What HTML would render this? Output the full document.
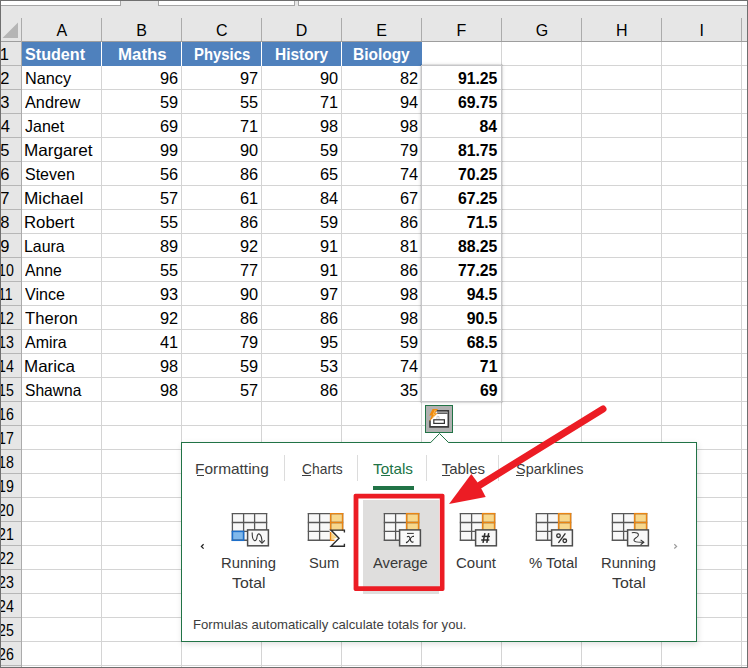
<!DOCTYPE html><html><head><meta charset="utf-8"><style>html,body{margin:0;padding:0;}body{width:748px;height:668px;overflow:hidden;position:relative;background:#fff;}</style></head><body>
<div style="position:absolute;left:0px;top:0px;width:748px;height:42px;background:#e6e6e6;"></div>
<div style="position:absolute;left:0px;top:1px;width:120px;height:4px;background:#fff;"></div>
<div style="position:absolute;left:120px;top:1px;width:1px;height:5px;background:#a6a6a6;"></div>
<div style="position:absolute;left:0px;top:5px;width:121px;height:1px;background:#a6a6a6;"></div>
<div style="position:absolute;left:159px;top:1px;width:135px;height:4px;background:#fff;"></div>
<div style="position:absolute;left:158px;top:1px;width:1px;height:5px;background:#a6a6a6;"></div>
<div style="position:absolute;left:294px;top:1px;width:1px;height:5px;background:#a6a6a6;"></div>
<div style="position:absolute;left:158px;top:5px;width:137px;height:1px;background:#a6a6a6;"></div>
<div style="position:absolute;left:299px;top:1px;width:448px;height:4px;background:#fff;"></div>
<div style="position:absolute;left:298px;top:1px;width:1px;height:5px;background:#a6a6a6;"></div>
<div style="position:absolute;left:298px;top:5px;width:449px;height:1px;background:#a6a6a6;"></div>
<div style="position:absolute;left:0px;top:41px;width:748px;height:1px;background:#9e9e9e;"></div>
<div style="position:absolute;left:0px;top:42px;width:21px;height:626px;background:#e6e6e6;"></div>
<div style="position:absolute;left:21px;top:18px;width:1px;height:650px;background:#ababab;"></div>
<svg style="position:absolute;left:0;top:0" width="30" height="42"><polygon points="2.5,38 18,22.5 18,38" fill="#b5b5b5"/></svg>
<div style="position:absolute;left:101px;top:18px;width:1px;height:23px;background:#ababab;"></div>
<div style="position:absolute;left:56.48px;top:23.06px;font:400 16px/16px 'Liberation Sans', sans-serif;color:#000;white-space:nowrap;">A</div>
<div style="position:absolute;left:181px;top:18px;width:1px;height:23px;background:#ababab;"></div>
<div style="position:absolute;left:136.24px;top:23.06px;font:400 16px/16px 'Liberation Sans', sans-serif;color:#000;white-space:nowrap;">B</div>
<div style="position:absolute;left:261px;top:18px;width:1px;height:23px;background:#ababab;"></div>
<div style="position:absolute;left:215.92px;top:23.06px;font:400 16px/16px 'Liberation Sans', sans-serif;color:#000;white-space:nowrap;">C</div>
<div style="position:absolute;left:341px;top:18px;width:1px;height:23px;background:#ababab;"></div>
<div style="position:absolute;left:295.76px;top:23.06px;font:400 16px/16px 'Liberation Sans', sans-serif;color:#000;white-space:nowrap;">D</div>
<div style="position:absolute;left:421px;top:18px;width:1px;height:23px;background:#ababab;"></div>
<div style="position:absolute;left:376.16px;top:23.06px;font:400 16px/16px 'Liberation Sans', sans-serif;color:#000;white-space:nowrap;">E</div>
<div style="position:absolute;left:501px;top:18px;width:1px;height:23px;background:#ababab;"></div>
<div style="position:absolute;left:456.60px;top:23.06px;font:400 16px/16px 'Liberation Sans', sans-serif;color:#000;white-space:nowrap;">F</div>
<div style="position:absolute;left:581px;top:18px;width:1px;height:23px;background:#ababab;"></div>
<div style="position:absolute;left:535.76px;top:23.06px;font:400 16px/16px 'Liberation Sans', sans-serif;color:#000;white-space:nowrap;">G</div>
<div style="position:absolute;left:661px;top:18px;width:1px;height:23px;background:#ababab;"></div>
<div style="position:absolute;left:616.04px;top:23.06px;font:400 16px/16px 'Liberation Sans', sans-serif;color:#000;white-space:nowrap;">H</div>
<div style="position:absolute;left:741px;top:18px;width:1px;height:23px;background:#ababab;"></div>
<div style="position:absolute;left:699.60px;top:23.06px;font:400 16px/16px 'Liberation Sans', sans-serif;color:#000;white-space:nowrap;">I</div>
<div style="position:absolute;left:22px;top:65px;width:726px;height:1px;background:#d4d4d4;"></div>
<div style="position:absolute;left:0px;top:65px;width:21px;height:1px;background:#b6b6b6;"></div>
<div style="position:absolute;left:22px;top:89px;width:726px;height:1px;background:#d4d4d4;"></div>
<div style="position:absolute;left:0px;top:89px;width:21px;height:1px;background:#b6b6b6;"></div>
<div style="position:absolute;left:22px;top:113px;width:726px;height:1px;background:#d4d4d4;"></div>
<div style="position:absolute;left:0px;top:113px;width:21px;height:1px;background:#b6b6b6;"></div>
<div style="position:absolute;left:22px;top:137px;width:726px;height:1px;background:#d4d4d4;"></div>
<div style="position:absolute;left:0px;top:137px;width:21px;height:1px;background:#b6b6b6;"></div>
<div style="position:absolute;left:22px;top:161px;width:726px;height:1px;background:#d4d4d4;"></div>
<div style="position:absolute;left:0px;top:161px;width:21px;height:1px;background:#b6b6b6;"></div>
<div style="position:absolute;left:22px;top:185px;width:726px;height:1px;background:#d4d4d4;"></div>
<div style="position:absolute;left:0px;top:185px;width:21px;height:1px;background:#b6b6b6;"></div>
<div style="position:absolute;left:22px;top:209px;width:726px;height:1px;background:#d4d4d4;"></div>
<div style="position:absolute;left:0px;top:209px;width:21px;height:1px;background:#b6b6b6;"></div>
<div style="position:absolute;left:22px;top:233px;width:726px;height:1px;background:#d4d4d4;"></div>
<div style="position:absolute;left:0px;top:233px;width:21px;height:1px;background:#b6b6b6;"></div>
<div style="position:absolute;left:22px;top:257px;width:726px;height:1px;background:#d4d4d4;"></div>
<div style="position:absolute;left:0px;top:257px;width:21px;height:1px;background:#b6b6b6;"></div>
<div style="position:absolute;left:22px;top:281px;width:726px;height:1px;background:#d4d4d4;"></div>
<div style="position:absolute;left:0px;top:281px;width:21px;height:1px;background:#b6b6b6;"></div>
<div style="position:absolute;left:22px;top:305px;width:726px;height:1px;background:#d4d4d4;"></div>
<div style="position:absolute;left:0px;top:305px;width:21px;height:1px;background:#b6b6b6;"></div>
<div style="position:absolute;left:22px;top:329px;width:726px;height:1px;background:#d4d4d4;"></div>
<div style="position:absolute;left:0px;top:329px;width:21px;height:1px;background:#b6b6b6;"></div>
<div style="position:absolute;left:22px;top:353px;width:726px;height:1px;background:#d4d4d4;"></div>
<div style="position:absolute;left:0px;top:353px;width:21px;height:1px;background:#b6b6b6;"></div>
<div style="position:absolute;left:22px;top:377px;width:726px;height:1px;background:#d4d4d4;"></div>
<div style="position:absolute;left:0px;top:377px;width:21px;height:1px;background:#b6b6b6;"></div>
<div style="position:absolute;left:22px;top:401px;width:726px;height:1px;background:#d4d4d4;"></div>
<div style="position:absolute;left:0px;top:401px;width:21px;height:1px;background:#b6b6b6;"></div>
<div style="position:absolute;left:22px;top:425px;width:726px;height:1px;background:#d4d4d4;"></div>
<div style="position:absolute;left:0px;top:425px;width:21px;height:1px;background:#b6b6b6;"></div>
<div style="position:absolute;left:22px;top:449px;width:726px;height:1px;background:#d4d4d4;"></div>
<div style="position:absolute;left:0px;top:449px;width:21px;height:1px;background:#b6b6b6;"></div>
<div style="position:absolute;left:22px;top:473px;width:726px;height:1px;background:#d4d4d4;"></div>
<div style="position:absolute;left:0px;top:473px;width:21px;height:1px;background:#b6b6b6;"></div>
<div style="position:absolute;left:22px;top:497px;width:726px;height:1px;background:#d4d4d4;"></div>
<div style="position:absolute;left:0px;top:497px;width:21px;height:1px;background:#b6b6b6;"></div>
<div style="position:absolute;left:22px;top:521px;width:726px;height:1px;background:#d4d4d4;"></div>
<div style="position:absolute;left:0px;top:521px;width:21px;height:1px;background:#b6b6b6;"></div>
<div style="position:absolute;left:22px;top:545px;width:726px;height:1px;background:#d4d4d4;"></div>
<div style="position:absolute;left:0px;top:545px;width:21px;height:1px;background:#b6b6b6;"></div>
<div style="position:absolute;left:22px;top:569px;width:726px;height:1px;background:#d4d4d4;"></div>
<div style="position:absolute;left:0px;top:569px;width:21px;height:1px;background:#b6b6b6;"></div>
<div style="position:absolute;left:22px;top:593px;width:726px;height:1px;background:#d4d4d4;"></div>
<div style="position:absolute;left:0px;top:593px;width:21px;height:1px;background:#b6b6b6;"></div>
<div style="position:absolute;left:22px;top:617px;width:726px;height:1px;background:#d4d4d4;"></div>
<div style="position:absolute;left:0px;top:617px;width:21px;height:1px;background:#b6b6b6;"></div>
<div style="position:absolute;left:22px;top:641px;width:726px;height:1px;background:#d4d4d4;"></div>
<div style="position:absolute;left:0px;top:641px;width:21px;height:1px;background:#b6b6b6;"></div>
<div style="position:absolute;left:22px;top:665px;width:726px;height:1px;background:#d4d4d4;"></div>
<div style="position:absolute;left:0px;top:665px;width:21px;height:1px;background:#b6b6b6;"></div>
<div style="position:absolute;left:101px;top:42px;width:1px;height:626px;background:#d4d4d4;"></div>
<div style="position:absolute;left:181px;top:42px;width:1px;height:626px;background:#d4d4d4;"></div>
<div style="position:absolute;left:261px;top:42px;width:1px;height:626px;background:#d4d4d4;"></div>
<div style="position:absolute;left:341px;top:42px;width:1px;height:626px;background:#d4d4d4;"></div>
<div style="position:absolute;left:421px;top:42px;width:1px;height:626px;background:#d4d4d4;"></div>
<div style="position:absolute;left:501px;top:42px;width:1px;height:626px;background:#d4d4d4;"></div>
<div style="position:absolute;left:581px;top:42px;width:1px;height:626px;background:#d4d4d4;"></div>
<div style="position:absolute;left:661px;top:42px;width:1px;height:626px;background:#d4d4d4;"></div>
<div style="position:absolute;left:741px;top:42px;width:1px;height:626px;background:#d4d4d4;"></div>
<div style="position:absolute;left:-0.24px;top:45.53px;font:400 16.5px/16.5px 'Liberation Sans', sans-serif;color:#000;white-space:nowrap;">1</div>
<div style="position:absolute;left:0.17px;top:69.53px;font:400 16.5px/16.5px 'Liberation Sans', sans-serif;color:#000;white-space:nowrap;">2</div>
<div style="position:absolute;left:0.34px;top:93.53px;font:400 16.5px/16.5px 'Liberation Sans', sans-serif;color:#000;white-space:nowrap;">3</div>
<div style="position:absolute;left:0.67px;top:117.53px;font:400 16.5px/16.5px 'Liberation Sans', sans-serif;color:#000;white-space:nowrap;">4</div>
<div style="position:absolute;left:0.34px;top:141.53px;font:400 16.5px/16.5px 'Liberation Sans', sans-serif;color:#000;white-space:nowrap;">5</div>
<div style="position:absolute;left:0.17px;top:165.53px;font:400 16.5px/16.5px 'Liberation Sans', sans-serif;color:#000;white-space:nowrap;">6</div>
<div style="position:absolute;left:0.17px;top:189.53px;font:400 16.5px/16.5px 'Liberation Sans', sans-serif;color:#000;white-space:nowrap;">7</div>
<div style="position:absolute;left:0.26px;top:213.53px;font:400 16.5px/16.5px 'Liberation Sans', sans-serif;color:#000;white-space:nowrap;">8</div>
<div style="position:absolute;left:0.26px;top:237.53px;font:400 16.5px/16.5px 'Liberation Sans', sans-serif;color:#000;white-space:nowrap;">9</div>
<div style="position:absolute;left:-2.26px;top:261.53px;font:400 16.5px/16.5px 'Liberation Sans', sans-serif;color:#000;white-space:nowrap;transform:scaleX(0.8600);transform-origin:0 0;">10</div>
<div style="position:absolute;left:-2.26px;top:285.53px;font:400 16.5px/16.5px 'Liberation Sans', sans-serif;color:#000;white-space:nowrap;transform:scaleX(0.8600);transform-origin:0 0;">11</div>
<div style="position:absolute;left:-2.26px;top:309.53px;font:400 16.5px/16.5px 'Liberation Sans', sans-serif;color:#000;white-space:nowrap;transform:scaleX(0.8600);transform-origin:0 0;">12</div>
<div style="position:absolute;left:-2.26px;top:333.53px;font:400 16.5px/16.5px 'Liberation Sans', sans-serif;color:#000;white-space:nowrap;transform:scaleX(0.8600);transform-origin:0 0;">13</div>
<div style="position:absolute;left:-2.26px;top:357.53px;font:400 16.5px/16.5px 'Liberation Sans', sans-serif;color:#000;white-space:nowrap;transform:scaleX(0.8600);transform-origin:0 0;">14</div>
<div style="position:absolute;left:-2.26px;top:381.53px;font:400 16.5px/16.5px 'Liberation Sans', sans-serif;color:#000;white-space:nowrap;transform:scaleX(0.8600);transform-origin:0 0;">15</div>
<div style="position:absolute;left:-2.26px;top:405.53px;font:400 16.5px/16.5px 'Liberation Sans', sans-serif;color:#000;white-space:nowrap;transform:scaleX(0.8600);transform-origin:0 0;">16</div>
<div style="position:absolute;left:-2.26px;top:429.53px;font:400 16.5px/16.5px 'Liberation Sans', sans-serif;color:#000;white-space:nowrap;transform:scaleX(0.8600);transform-origin:0 0;">17</div>
<div style="position:absolute;left:-2.26px;top:453.53px;font:400 16.5px/16.5px 'Liberation Sans', sans-serif;color:#000;white-space:nowrap;transform:scaleX(0.8600);transform-origin:0 0;">18</div>
<div style="position:absolute;left:-2.26px;top:477.53px;font:400 16.5px/16.5px 'Liberation Sans', sans-serif;color:#000;white-space:nowrap;transform:scaleX(0.8600);transform-origin:0 0;">19</div>
<div style="position:absolute;left:-1.91px;top:501.53px;font:400 16.5px/16.5px 'Liberation Sans', sans-serif;color:#000;white-space:nowrap;transform:scaleX(0.8600);transform-origin:0 0;">20</div>
<div style="position:absolute;left:-1.91px;top:525.53px;font:400 16.5px/16.5px 'Liberation Sans', sans-serif;color:#000;white-space:nowrap;transform:scaleX(0.8600);transform-origin:0 0;">21</div>
<div style="position:absolute;left:-1.91px;top:549.53px;font:400 16.5px/16.5px 'Liberation Sans', sans-serif;color:#000;white-space:nowrap;transform:scaleX(0.8600);transform-origin:0 0;">22</div>
<div style="position:absolute;left:-1.91px;top:573.53px;font:400 16.5px/16.5px 'Liberation Sans', sans-serif;color:#000;white-space:nowrap;transform:scaleX(0.8600);transform-origin:0 0;">23</div>
<div style="position:absolute;left:-1.91px;top:597.53px;font:400 16.5px/16.5px 'Liberation Sans', sans-serif;color:#000;white-space:nowrap;transform:scaleX(0.8600);transform-origin:0 0;">24</div>
<div style="position:absolute;left:-1.91px;top:621.53px;font:400 16.5px/16.5px 'Liberation Sans', sans-serif;color:#000;white-space:nowrap;transform:scaleX(0.8600);transform-origin:0 0;">25</div>
<div style="position:absolute;left:-1.91px;top:645.53px;font:400 16.5px/16.5px 'Liberation Sans', sans-serif;color:#000;white-space:nowrap;transform:scaleX(0.8600);transform-origin:0 0;">26</div>
<div style="position:absolute;left:22px;top:42px;width:400px;height:24px;background:#4f81bd;"></div>
<div style="position:absolute;left:101px;top:42px;width:1px;height:24px;background:#fff;"></div>
<div style="position:absolute;left:181px;top:42px;width:1px;height:24px;background:#fff;"></div>
<div style="position:absolute;left:261px;top:42px;width:1px;height:24px;background:#fff;"></div>
<div style="position:absolute;left:341px;top:42px;width:1px;height:24px;background:#fff;"></div>
<div style="position:absolute;left:24.82px;top:45.83px;font:700 16.5px/16.5px 'Liberation Sans', sans-serif;color:#fff;white-space:nowrap;transform:scaleX(0.9783);transform-origin:0 0;">Student</div>
<div style="position:absolute;left:117.61px;top:45.83px;font:700 16.5px/16.5px 'Liberation Sans', sans-serif;color:#fff;white-space:nowrap;transform:scaleX(1.0206);transform-origin:0 0;">Maths</div>
<div style="position:absolute;left:193.63px;top:45.83px;font:700 16.5px/16.5px 'Liberation Sans', sans-serif;color:#fff;white-space:nowrap;transform:scaleX(0.9004);transform-origin:0 0;">Physics</div>
<div style="position:absolute;left:274.60px;top:45.83px;font:700 16.5px/16.5px 'Liberation Sans', sans-serif;color:#fff;white-space:nowrap;transform:scaleX(0.9356);transform-origin:0 0;">History</div>
<div style="position:absolute;left:353.19px;top:45.83px;font:700 16.5px/16.5px 'Liberation Sans', sans-serif;color:#fff;white-space:nowrap;transform:scaleX(0.9373);transform-origin:0 0;">Biology</div>
<div style="position:absolute;left:421px;top:65px;width:79px;height:335px;border:1px solid #c6c6c8;box-shadow:0 0 0 1px rgba(0,0,0,0.07), 0 0 4px rgba(0,0,0,0.16);"></div>
<div style="position:absolute;left:24.60px;top:69.83px;font:400 16.5px/16.5px 'Liberation Sans', sans-serif;color:#000;white-space:nowrap;transform:scaleX(0.9855);transform-origin:0 0;">Nancy</div>
<div style="position:absolute;left:159.82px;top:69.83px;font:400 16.5px/16.5px 'Liberation Sans', sans-serif;color:#000;white-space:nowrap;transform:scaleX(0.9900);transform-origin:0 0;">96</div>
<div style="position:absolute;left:239.98px;top:69.83px;font:400 16.5px/16.5px 'Liberation Sans', sans-serif;color:#000;white-space:nowrap;transform:scaleX(0.9900);transform-origin:0 0;">97</div>
<div style="position:absolute;left:319.74px;top:69.83px;font:400 16.5px/16.5px 'Liberation Sans', sans-serif;color:#000;white-space:nowrap;transform:scaleX(0.9900);transform-origin:0 0;">90</div>
<div style="position:absolute;left:399.98px;top:69.83px;font:400 16.5px/16.5px 'Liberation Sans', sans-serif;color:#000;white-space:nowrap;transform:scaleX(0.9900);transform-origin:0 0;">82</div>
<div style="position:absolute;left:457.89px;top:70.73px;font:700 15.8px/15.8px 'Liberation Sans', sans-serif;color:#000;white-space:nowrap;">91.25</div>
<div style="position:absolute;left:25.20px;top:93.83px;font:400 16.5px/16.5px 'Liberation Sans', sans-serif;color:#000;white-space:nowrap;transform:scaleX(0.9854);transform-origin:0 0;">Andrew</div>
<div style="position:absolute;left:159.90px;top:93.83px;font:400 16.5px/16.5px 'Liberation Sans', sans-serif;color:#000;white-space:nowrap;transform:scaleX(0.9900);transform-origin:0 0;">59</div>
<div style="position:absolute;left:239.82px;top:93.83px;font:400 16.5px/16.5px 'Liberation Sans', sans-serif;color:#000;white-space:nowrap;transform:scaleX(0.9900);transform-origin:0 0;">55</div>
<div style="position:absolute;left:319.90px;top:93.83px;font:400 16.5px/16.5px 'Liberation Sans', sans-serif;color:#000;white-space:nowrap;transform:scaleX(0.9900);transform-origin:0 0;">71</div>
<div style="position:absolute;left:399.66px;top:93.83px;font:400 16.5px/16.5px 'Liberation Sans', sans-serif;color:#000;white-space:nowrap;transform:scaleX(0.9900);transform-origin:0 0;">94</div>
<div style="position:absolute;left:457.89px;top:94.73px;font:700 15.8px/15.8px 'Liberation Sans', sans-serif;color:#000;white-space:nowrap;">69.75</div>
<div style="position:absolute;left:24.66px;top:117.83px;font:400 16.5px/16.5px 'Liberation Sans', sans-serif;color:#000;white-space:nowrap;transform:scaleX(0.9697);transform-origin:0 0;">Janet</div>
<div style="position:absolute;left:159.90px;top:117.83px;font:400 16.5px/16.5px 'Liberation Sans', sans-serif;color:#000;white-space:nowrap;transform:scaleX(0.9900);transform-origin:0 0;">69</div>
<div style="position:absolute;left:239.90px;top:117.83px;font:400 16.5px/16.5px 'Liberation Sans', sans-serif;color:#000;white-space:nowrap;transform:scaleX(0.9900);transform-origin:0 0;">71</div>
<div style="position:absolute;left:319.82px;top:117.83px;font:400 16.5px/16.5px 'Liberation Sans', sans-serif;color:#000;white-space:nowrap;transform:scaleX(0.9900);transform-origin:0 0;">98</div>
<div style="position:absolute;left:399.82px;top:117.83px;font:400 16.5px/16.5px 'Liberation Sans', sans-serif;color:#000;white-space:nowrap;transform:scaleX(0.9900);transform-origin:0 0;">98</div>
<div style="position:absolute;left:479.54px;top:118.73px;font:700 15.8px/15.8px 'Liberation Sans', sans-serif;color:#000;white-space:nowrap;">84</div>
<div style="position:absolute;left:24.43px;top:141.83px;font:400 16.5px/16.5px 'Liberation Sans', sans-serif;color:#000;white-space:nowrap;transform:scaleX(1.0372);transform-origin:0 0;">Margaret</div>
<div style="position:absolute;left:159.90px;top:141.83px;font:400 16.5px/16.5px 'Liberation Sans', sans-serif;color:#000;white-space:nowrap;transform:scaleX(0.9900);transform-origin:0 0;">99</div>
<div style="position:absolute;left:239.74px;top:141.83px;font:400 16.5px/16.5px 'Liberation Sans', sans-serif;color:#000;white-space:nowrap;transform:scaleX(0.9900);transform-origin:0 0;">90</div>
<div style="position:absolute;left:319.90px;top:141.83px;font:400 16.5px/16.5px 'Liberation Sans', sans-serif;color:#000;white-space:nowrap;transform:scaleX(0.9900);transform-origin:0 0;">59</div>
<div style="position:absolute;left:399.90px;top:141.83px;font:400 16.5px/16.5px 'Liberation Sans', sans-serif;color:#000;white-space:nowrap;transform:scaleX(0.9900);transform-origin:0 0;">79</div>
<div style="position:absolute;left:457.89px;top:142.73px;font:700 15.8px/15.8px 'Liberation Sans', sans-serif;color:#000;white-space:nowrap;">81.75</div>
<div style="position:absolute;left:24.68px;top:165.83px;font:400 16.5px/16.5px 'Liberation Sans', sans-serif;color:#000;white-space:nowrap;transform:scaleX(0.9697);transform-origin:0 0;">Steven</div>
<div style="position:absolute;left:159.82px;top:165.83px;font:400 16.5px/16.5px 'Liberation Sans', sans-serif;color:#000;white-space:nowrap;transform:scaleX(0.9900);transform-origin:0 0;">56</div>
<div style="position:absolute;left:239.82px;top:165.83px;font:400 16.5px/16.5px 'Liberation Sans', sans-serif;color:#000;white-space:nowrap;transform:scaleX(0.9900);transform-origin:0 0;">86</div>
<div style="position:absolute;left:319.82px;top:165.83px;font:400 16.5px/16.5px 'Liberation Sans', sans-serif;color:#000;white-space:nowrap;transform:scaleX(0.9900);transform-origin:0 0;">65</div>
<div style="position:absolute;left:399.66px;top:165.83px;font:400 16.5px/16.5px 'Liberation Sans', sans-serif;color:#000;white-space:nowrap;transform:scaleX(0.9900);transform-origin:0 0;">74</div>
<div style="position:absolute;left:457.89px;top:166.73px;font:700 15.8px/15.8px 'Liberation Sans', sans-serif;color:#000;white-space:nowrap;">70.25</div>
<div style="position:absolute;left:24.22px;top:189.83px;font:400 16.5px/16.5px 'Liberation Sans', sans-serif;color:#000;white-space:nowrap;transform:scaleX(1.0432);transform-origin:0 0;">Michael</div>
<div style="position:absolute;left:159.98px;top:189.83px;font:400 16.5px/16.5px 'Liberation Sans', sans-serif;color:#000;white-space:nowrap;transform:scaleX(0.9900);transform-origin:0 0;">57</div>
<div style="position:absolute;left:239.90px;top:189.83px;font:400 16.5px/16.5px 'Liberation Sans', sans-serif;color:#000;white-space:nowrap;transform:scaleX(0.9900);transform-origin:0 0;">61</div>
<div style="position:absolute;left:319.66px;top:189.83px;font:400 16.5px/16.5px 'Liberation Sans', sans-serif;color:#000;white-space:nowrap;transform:scaleX(0.9900);transform-origin:0 0;">84</div>
<div style="position:absolute;left:399.98px;top:189.83px;font:400 16.5px/16.5px 'Liberation Sans', sans-serif;color:#000;white-space:nowrap;transform:scaleX(0.9900);transform-origin:0 0;">67</div>
<div style="position:absolute;left:457.89px;top:190.73px;font:700 15.8px/15.8px 'Liberation Sans', sans-serif;color:#000;white-space:nowrap;">67.25</div>
<div style="position:absolute;left:24.26px;top:213.83px;font:400 16.5px/16.5px 'Liberation Sans', sans-serif;color:#000;white-space:nowrap;transform:scaleX(1.0167);transform-origin:0 0;">Robert</div>
<div style="position:absolute;left:159.82px;top:213.83px;font:400 16.5px/16.5px 'Liberation Sans', sans-serif;color:#000;white-space:nowrap;transform:scaleX(0.9900);transform-origin:0 0;">55</div>
<div style="position:absolute;left:239.82px;top:213.83px;font:400 16.5px/16.5px 'Liberation Sans', sans-serif;color:#000;white-space:nowrap;transform:scaleX(0.9900);transform-origin:0 0;">86</div>
<div style="position:absolute;left:319.90px;top:213.83px;font:400 16.5px/16.5px 'Liberation Sans', sans-serif;color:#000;white-space:nowrap;transform:scaleX(0.9900);transform-origin:0 0;">59</div>
<div style="position:absolute;left:399.82px;top:213.83px;font:400 16.5px/16.5px 'Liberation Sans', sans-serif;color:#000;white-space:nowrap;transform:scaleX(0.9900);transform-origin:0 0;">86</div>
<div style="position:absolute;left:466.66px;top:214.73px;font:700 15.8px/15.8px 'Liberation Sans', sans-serif;color:#000;white-space:nowrap;">71.5</div>
<div style="position:absolute;left:24.33px;top:237.83px;font:400 16.5px/16.5px 'Liberation Sans', sans-serif;color:#000;white-space:nowrap;transform:scaleX(0.9648);transform-origin:0 0;">Laura</div>
<div style="position:absolute;left:159.90px;top:237.83px;font:400 16.5px/16.5px 'Liberation Sans', sans-serif;color:#000;white-space:nowrap;transform:scaleX(0.9900);transform-origin:0 0;">89</div>
<div style="position:absolute;left:239.98px;top:237.83px;font:400 16.5px/16.5px 'Liberation Sans', sans-serif;color:#000;white-space:nowrap;transform:scaleX(0.9900);transform-origin:0 0;">92</div>
<div style="position:absolute;left:319.90px;top:237.83px;font:400 16.5px/16.5px 'Liberation Sans', sans-serif;color:#000;white-space:nowrap;transform:scaleX(0.9900);transform-origin:0 0;">91</div>
<div style="position:absolute;left:399.90px;top:237.83px;font:400 16.5px/16.5px 'Liberation Sans', sans-serif;color:#000;white-space:nowrap;transform:scaleX(0.9900);transform-origin:0 0;">81</div>
<div style="position:absolute;left:457.89px;top:238.73px;font:700 15.8px/15.8px 'Liberation Sans', sans-serif;color:#000;white-space:nowrap;">88.25</div>
<div style="position:absolute;left:25.20px;top:261.83px;font:400 16.5px/16.5px 'Liberation Sans', sans-serif;color:#000;white-space:nowrap;transform:scaleX(0.9554);transform-origin:0 0;">Anne</div>
<div style="position:absolute;left:159.82px;top:261.83px;font:400 16.5px/16.5px 'Liberation Sans', sans-serif;color:#000;white-space:nowrap;transform:scaleX(0.9900);transform-origin:0 0;">55</div>
<div style="position:absolute;left:239.98px;top:261.83px;font:400 16.5px/16.5px 'Liberation Sans', sans-serif;color:#000;white-space:nowrap;transform:scaleX(0.9900);transform-origin:0 0;">77</div>
<div style="position:absolute;left:319.90px;top:261.83px;font:400 16.5px/16.5px 'Liberation Sans', sans-serif;color:#000;white-space:nowrap;transform:scaleX(0.9900);transform-origin:0 0;">91</div>
<div style="position:absolute;left:399.82px;top:261.83px;font:400 16.5px/16.5px 'Liberation Sans', sans-serif;color:#000;white-space:nowrap;transform:scaleX(0.9900);transform-origin:0 0;">86</div>
<div style="position:absolute;left:457.89px;top:262.73px;font:700 15.8px/15.8px 'Liberation Sans', sans-serif;color:#000;white-space:nowrap;">77.25</div>
<div style="position:absolute;left:25.32px;top:285.83px;font:400 16.5px/16.5px 'Liberation Sans', sans-serif;color:#000;white-space:nowrap;transform:scaleX(0.9727);transform-origin:0 0;">Vince</div>
<div style="position:absolute;left:159.82px;top:285.83px;font:400 16.5px/16.5px 'Liberation Sans', sans-serif;color:#000;white-space:nowrap;transform:scaleX(0.9900);transform-origin:0 0;">93</div>
<div style="position:absolute;left:239.74px;top:285.83px;font:400 16.5px/16.5px 'Liberation Sans', sans-serif;color:#000;white-space:nowrap;transform:scaleX(0.9900);transform-origin:0 0;">90</div>
<div style="position:absolute;left:319.98px;top:285.83px;font:400 16.5px/16.5px 'Liberation Sans', sans-serif;color:#000;white-space:nowrap;transform:scaleX(0.9900);transform-origin:0 0;">97</div>
<div style="position:absolute;left:399.82px;top:285.83px;font:400 16.5px/16.5px 'Liberation Sans', sans-serif;color:#000;white-space:nowrap;transform:scaleX(0.9900);transform-origin:0 0;">98</div>
<div style="position:absolute;left:466.66px;top:286.73px;font:700 15.8px/15.8px 'Liberation Sans', sans-serif;color:#000;white-space:nowrap;">94.5</div>
<div style="position:absolute;left:25.07px;top:309.83px;font:400 16.5px/16.5px 'Liberation Sans', sans-serif;color:#000;white-space:nowrap;transform:scaleX(1.0075);transform-origin:0 0;">Theron</div>
<div style="position:absolute;left:159.98px;top:309.83px;font:400 16.5px/16.5px 'Liberation Sans', sans-serif;color:#000;white-space:nowrap;transform:scaleX(0.9900);transform-origin:0 0;">92</div>
<div style="position:absolute;left:239.82px;top:309.83px;font:400 16.5px/16.5px 'Liberation Sans', sans-serif;color:#000;white-space:nowrap;transform:scaleX(0.9900);transform-origin:0 0;">86</div>
<div style="position:absolute;left:319.82px;top:309.83px;font:400 16.5px/16.5px 'Liberation Sans', sans-serif;color:#000;white-space:nowrap;transform:scaleX(0.9900);transform-origin:0 0;">86</div>
<div style="position:absolute;left:399.82px;top:309.83px;font:400 16.5px/16.5px 'Liberation Sans', sans-serif;color:#000;white-space:nowrap;transform:scaleX(0.9900);transform-origin:0 0;">98</div>
<div style="position:absolute;left:466.66px;top:310.73px;font:700 15.8px/15.8px 'Liberation Sans', sans-serif;color:#000;white-space:nowrap;">90.5</div>
<div style="position:absolute;left:25.40px;top:333.83px;font:400 16.5px/16.5px 'Liberation Sans', sans-serif;color:#000;white-space:nowrap;transform:scaleX(0.9683);transform-origin:0 0;">Amira</div>
<div style="position:absolute;left:159.90px;top:333.83px;font:400 16.5px/16.5px 'Liberation Sans', sans-serif;color:#000;white-space:nowrap;transform:scaleX(0.9900);transform-origin:0 0;">41</div>
<div style="position:absolute;left:239.90px;top:333.83px;font:400 16.5px/16.5px 'Liberation Sans', sans-serif;color:#000;white-space:nowrap;transform:scaleX(0.9900);transform-origin:0 0;">79</div>
<div style="position:absolute;left:319.82px;top:333.83px;font:400 16.5px/16.5px 'Liberation Sans', sans-serif;color:#000;white-space:nowrap;transform:scaleX(0.9900);transform-origin:0 0;">95</div>
<div style="position:absolute;left:399.90px;top:333.83px;font:400 16.5px/16.5px 'Liberation Sans', sans-serif;color:#000;white-space:nowrap;transform:scaleX(0.9900);transform-origin:0 0;">59</div>
<div style="position:absolute;left:466.66px;top:334.73px;font:700 15.8px/15.8px 'Liberation Sans', sans-serif;color:#000;white-space:nowrap;">68.5</div>
<div style="position:absolute;left:24.24px;top:357.83px;font:400 16.5px/16.5px 'Liberation Sans', sans-serif;color:#000;white-space:nowrap;transform:scaleX(1.0295);transform-origin:0 0;">Marica</div>
<div style="position:absolute;left:159.82px;top:357.83px;font:400 16.5px/16.5px 'Liberation Sans', sans-serif;color:#000;white-space:nowrap;transform:scaleX(0.9900);transform-origin:0 0;">98</div>
<div style="position:absolute;left:239.90px;top:357.83px;font:400 16.5px/16.5px 'Liberation Sans', sans-serif;color:#000;white-space:nowrap;transform:scaleX(0.9900);transform-origin:0 0;">59</div>
<div style="position:absolute;left:319.82px;top:357.83px;font:400 16.5px/16.5px 'Liberation Sans', sans-serif;color:#000;white-space:nowrap;transform:scaleX(0.9900);transform-origin:0 0;">53</div>
<div style="position:absolute;left:399.66px;top:357.83px;font:400 16.5px/16.5px 'Liberation Sans', sans-serif;color:#000;white-space:nowrap;transform:scaleX(0.9900);transform-origin:0 0;">74</div>
<div style="position:absolute;left:479.86px;top:358.73px;font:700 15.8px/15.8px 'Liberation Sans', sans-serif;color:#000;white-space:nowrap;">71</div>
<div style="position:absolute;left:24.70px;top:381.83px;font:400 16.5px/16.5px 'Liberation Sans', sans-serif;color:#000;white-space:nowrap;transform:scaleX(0.9456);transform-origin:0 0;">Shawna</div>
<div style="position:absolute;left:159.82px;top:381.83px;font:400 16.5px/16.5px 'Liberation Sans', sans-serif;color:#000;white-space:nowrap;transform:scaleX(0.9900);transform-origin:0 0;">98</div>
<div style="position:absolute;left:239.98px;top:381.83px;font:400 16.5px/16.5px 'Liberation Sans', sans-serif;color:#000;white-space:nowrap;transform:scaleX(0.9900);transform-origin:0 0;">57</div>
<div style="position:absolute;left:319.82px;top:381.83px;font:400 16.5px/16.5px 'Liberation Sans', sans-serif;color:#000;white-space:nowrap;transform:scaleX(0.9900);transform-origin:0 0;">86</div>
<div style="position:absolute;left:399.82px;top:381.83px;font:400 16.5px/16.5px 'Liberation Sans', sans-serif;color:#000;white-space:nowrap;transform:scaleX(0.9900);transform-origin:0 0;">35</div>
<div style="position:absolute;left:480.01px;top:382.73px;font:700 15.8px/15.8px 'Liberation Sans', sans-serif;color:#000;white-space:nowrap;">69</div>
<div style="position:absolute;left:425px;top:405px;width:28px;height:28px;background:#b1b1b1;box-sizing:border-box;border:1px solid #217346;"></div>
<svg style="position:absolute;left:0;top:0" width="748" height="668" viewBox="0 0 748 668">
<polygon points="437,410.9 448.3,410.9 448.3,426.9 430,426.9 430,420.5" fill="#fff"/>
<path d="M436.6,410.9 H448.3 V426.9 H430 V420.2" fill="none" stroke="#3a3a3a" stroke-width="1.6"/>
<rect x="436.8" y="411.7" width="10.7" height="1.1" fill="#a0a0a0"/>
<line x1="437.2" y1="413.3" x2="447.5" y2="413.3" stroke="#3a3a3a" stroke-width="1"/>
<rect x="433.8" y="419.8" width="10.6" height="3.6" fill="#fff" stroke="#333" stroke-width="1.2"/>
<path d="M436.8,419 L437.2,416.2 L439,416.6 L439,419" fill="none" stroke="#bdbdbd" stroke-width="0.8"/>
<polygon points="432.6,409 438,409 434.8,413.3 437.6,413.3 429.2,421.4 431.7,415.5 429.3,415.5" fill="#f08a0c"/>
<polyline points="435.4,410 433.2,414.4 435,414.4 432.6,417.6" fill="none" stroke="#ffcf70" stroke-width="0.7"/>
</svg>
<div style="position:absolute;left:181px;top:442px;width:514px;height:198px;border:1px solid #217346;background:#fff;box-shadow:1px 2px 6px rgba(0,0,0,0.13);"></div>
<svg style="position:absolute;left:428px;top:432px" width="24" height="12" viewBox="0 0 24 12">
<polygon points="2.2,11.2 11.5,1.5 21,11.2" fill="#fff"/>
<polyline points="2.7,10.5 11.5,1.5 20.5,10.5" fill="none" stroke="#217346" stroke-width="1"/>
</svg>
<div style="position:absolute;left:195.27px;top:460.90px;font:400 15px/15px 'Liberation Sans', sans-serif;color:#3c3c3c;white-space:nowrap;transform:scaleX(1.0284);transform-origin:0 0;">Formatting</div>
<div style="position:absolute;left:301.71px;top:460.90px;font:400 15px/15px 'Liberation Sans', sans-serif;color:#3c3c3c;white-space:nowrap;transform:scaleX(0.9231);transform-origin:0 0;">Charts</div>
<div style="position:absolute;left:373.19px;top:460.90px;font:400 15px/15px 'Liberation Sans', sans-serif;color:#217346;white-space:nowrap;transform:scaleX(1.0202);transform-origin:0 0;">Totals</div>
<div style="position:absolute;left:441.70px;top:460.90px;font:400 15px/15px 'Liberation Sans', sans-serif;color:#3c3c3c;white-space:nowrap;">Tables</div>
<div style="position:absolute;left:515.65px;top:460.90px;font:400 15px/15px 'Liberation Sans', sans-serif;color:#3c3c3c;white-space:nowrap;transform:scaleX(0.9630);transform-origin:0 0;">Sparklines</div>
<div style="position:absolute;left:196.5px;top:475px;width:7px;height:1px;background:#3c3c3c;"></div>
<div style="position:absolute;left:302px;top:475px;width:9px;height:1px;background:#3c3c3c;"></div>
<div style="position:absolute;left:381px;top:475px;width:9px;height:1px;background:#217346;"></div>
<div style="position:absolute;left:442px;top:475px;width:8px;height:1px;background:#3c3c3c;"></div>
<div style="position:absolute;left:516.3px;top:475px;width:8px;height:1px;background:#3c3c3c;"></div>
<div style="position:absolute;left:284px;top:455px;width:1px;height:26px;background:#dcdcdc;"></div>
<div style="position:absolute;left:357px;top:455px;width:1px;height:26px;background:#dcdcdc;"></div>
<div style="position:absolute;left:426px;top:455px;width:1px;height:26px;background:#dcdcdc;"></div>
<div style="position:absolute;left:498px;top:455px;width:1px;height:26px;background:#dcdcdc;"></div>
<div style="position:absolute;left:373px;top:486px;width:41px;height:4px;background:#217346;"></div>
<div style="position:absolute;left:363px;top:500px;width:76px;height:94px;background:#dfdedd;"></div>
<svg style="position:absolute;left:0;top:0" width="748" height="668" viewBox="0 0 748 668"><rect x="232.4" y="513.6" width="34.2" height="26.7" fill="#f8f8f8"/><rect x="232.4" y="531.4" width="11.2" height="8.9" fill="#80b9ec"/><line x1="231.8" y1="513.6" x2="267.2" y2="513.6" stroke="#585858" stroke-width="1.4"/><line x1="231.8" y1="522.5" x2="267.2" y2="522.5" stroke="#585858" stroke-width="1.4"/><line x1="231.8" y1="531.4" x2="267.2" y2="531.4" stroke="#585858" stroke-width="1.4"/><line x1="231.8" y1="540.3" x2="267.2" y2="540.3" stroke="#585858" stroke-width="1.4"/><line x1="232.4" y1="513" x2="232.4" y2="541" stroke="#585858" stroke-width="1.3"/><line x1="243.6" y1="513" x2="243.6" y2="541" stroke="#585858" stroke-width="1.3"/><line x1="254.6" y1="513" x2="254.6" y2="541" stroke="#585858" stroke-width="1.3"/><line x1="266.6" y1="513" x2="266.6" y2="541" stroke="#585858" stroke-width="1.3"/><rect x="232.4" y="531.4" width="11.2" height="8.9" fill="none" stroke="#1d6fca" stroke-width="1.5"/><rect x="247.6" y="529.9" width="20.8" height="15.9" fill="#f8f8f8" stroke="#4d4d4d" stroke-width="1.5"/><path d="M252.2,532.6 C252,542.5 256.6,542.5 257,537 C257.4,532 262,532.5 262,543" fill="none" stroke="#333" stroke-width="1.1"/><path d="M259.3,540.4 L262,543.3 L264.8,540.4" fill="none" stroke="#333" stroke-width="1.1"/></svg>
<div style="position:absolute;left:221.22px;top:555.73px;font:400 14.5px/14.5px 'Liberation Sans', sans-serif;color:#383838;white-space:nowrap;transform:scaleX(1.0191);transform-origin:0 0;">Running</div>
<div style="position:absolute;left:232.18px;top:575.73px;font:400 14.5px/14.5px 'Liberation Sans', sans-serif;color:#383838;white-space:nowrap;transform:scaleX(1.0932);transform-origin:0 0;">Total</div>
<svg style="position:absolute;left:0;top:0" width="748" height="668" viewBox="0 0 748 668"><rect x="308.4" y="513.6" width="34.2" height="26.7" fill="#f8f8f8"/><rect x="330.6" y="513.6" width="12" height="17.8" fill="#f8d88c"/><line x1="307.8" y1="513.6" x2="343.2" y2="513.6" stroke="#585858" stroke-width="1.4"/><line x1="307.8" y1="522.5" x2="343.2" y2="522.5" stroke="#585858" stroke-width="1.4"/><line x1="307.8" y1="531.4" x2="343.2" y2="531.4" stroke="#585858" stroke-width="1.4"/><line x1="307.8" y1="540.3" x2="343.2" y2="540.3" stroke="#585858" stroke-width="1.4"/><line x1="308.4" y1="513" x2="308.4" y2="541" stroke="#585858" stroke-width="1.3"/><line x1="319.6" y1="513" x2="319.6" y2="541" stroke="#585858" stroke-width="1.3"/><line x1="330.6" y1="513" x2="330.6" y2="541" stroke="#585858" stroke-width="1.3"/><line x1="342.6" y1="513" x2="342.6" y2="541" stroke="#585858" stroke-width="1.3"/><rect x="330" y="530.6" width="14" height="11" fill="#fff"/><rect x="329.5" y="530.2" width="1.2" height="1.6" fill="#fff"/><polygon points="331.2,532.2 337,537.8 331.2,539.6" fill="#f8d88c"/><path d="M330.6,530.6 V513.6 H342.6 V530.6" fill="none" stroke="#e98514" stroke-width="1.4"/><line x1="330.6" y1="522.5" x2="342.6" y2="522.5" stroke="#e98514" stroke-width="1.4"/><line x1="330.6" y1="532" x2="330.6" y2="540.3" stroke="#e98514" stroke-width="1.4"/><line x1="330" y1="540.3" x2="334.5" y2="540.3" stroke="#e98514" stroke-width="1.4"/><path d="M344.4,532.4 L344.4,530.1 L331,530.1 L339,538.2 L331,546.2 L344.4,546.2 L344.4,543.8" fill="none" stroke="#2d2d2d" stroke-width="1.4" stroke-linejoin="miter"/></svg>
<div style="position:absolute;left:309.34px;top:555.73px;font:400 14.5px/14.5px 'Liberation Sans', sans-serif;color:#383838;white-space:nowrap;transform:scaleX(1.0115);transform-origin:0 0;">Sum</div>
<svg style="position:absolute;left:0;top:0" width="748" height="668" viewBox="0 0 748 668"><rect x="384.4" y="513.6" width="34.2" height="26.7" fill="#f8f8f8"/><rect x="406.6" y="513.6" width="12" height="17.8" fill="#f8d88c"/><line x1="383.8" y1="513.6" x2="419.2" y2="513.6" stroke="#585858" stroke-width="1.4"/><line x1="383.8" y1="522.5" x2="419.2" y2="522.5" stroke="#585858" stroke-width="1.4"/><line x1="383.8" y1="531.4" x2="419.2" y2="531.4" stroke="#585858" stroke-width="1.4"/><line x1="383.8" y1="540.3" x2="419.2" y2="540.3" stroke="#585858" stroke-width="1.4"/><line x1="384.4" y1="513" x2="384.4" y2="541" stroke="#585858" stroke-width="1.3"/><line x1="395.6" y1="513" x2="395.6" y2="541" stroke="#585858" stroke-width="1.3"/><line x1="406.6" y1="513" x2="406.6" y2="541" stroke="#585858" stroke-width="1.3"/><line x1="418.6" y1="513" x2="418.6" y2="541" stroke="#585858" stroke-width="1.3"/><rect x="406.6" y="513.6" width="12" height="17.8" fill="none" stroke="#e98514" stroke-width="1.4"/><line x1="406.6" y1="522.5" x2="418.6" y2="522.5" stroke="#e98514" stroke-width="1.4"/><rect x="399.6" y="529.9" width="20.8" height="15.9" fill="#f8f8f8" stroke="#4d4d4d" stroke-width="1.5"/><line x1="407" y1="533.4" x2="413.8" y2="533.4" stroke="#333" stroke-width="1"/><g fill="none" stroke="#2a2a2a" stroke-width="1.05" stroke-linecap="round"><path d="M407.3,536.7 Q409.5,535.5 410.2,538.8 Q410.9,542.9 413.1,541.9"/><path d="M413.5,536.3 Q412.3,535.9 410.2,538.8 Q408.2,541.9 406.4,542.6"/></g><circle cx="406.7" cy="542.4" r="0.75" fill="#2a2a2a"/><circle cx="413.2" cy="536.4" r="0.7" fill="#2a2a2a"/></svg>
<div style="position:absolute;left:373.40px;top:555.73px;font:400 14.5px/14.5px 'Liberation Sans', sans-serif;color:#383838;white-space:nowrap;transform:scaleX(1.0156);transform-origin:0 0;">Average</div>
<svg style="position:absolute;left:0;top:0" width="748" height="668" viewBox="0 0 748 668"><rect x="460.4" y="513.6" width="34.2" height="26.7" fill="#f8f8f8"/><rect x="482.6" y="513.6" width="12" height="17.8" fill="#f8d88c"/><line x1="459.8" y1="513.6" x2="495.2" y2="513.6" stroke="#585858" stroke-width="1.4"/><line x1="459.8" y1="522.5" x2="495.2" y2="522.5" stroke="#585858" stroke-width="1.4"/><line x1="459.8" y1="531.4" x2="495.2" y2="531.4" stroke="#585858" stroke-width="1.4"/><line x1="459.8" y1="540.3" x2="495.2" y2="540.3" stroke="#585858" stroke-width="1.4"/><line x1="460.4" y1="513" x2="460.4" y2="541" stroke="#585858" stroke-width="1.3"/><line x1="471.6" y1="513" x2="471.6" y2="541" stroke="#585858" stroke-width="1.3"/><line x1="482.6" y1="513" x2="482.6" y2="541" stroke="#585858" stroke-width="1.3"/><line x1="494.6" y1="513" x2="494.6" y2="541" stroke="#585858" stroke-width="1.3"/><rect x="482.6" y="513.6" width="12" height="17.8" fill="none" stroke="#e98514" stroke-width="1.4"/><line x1="482.6" y1="522.5" x2="494.6" y2="522.5" stroke="#e98514" stroke-width="1.4"/><rect x="475.6" y="529.9" width="20.8" height="15.9" fill="#f8f8f8" stroke="#4d4d4d" stroke-width="1.5"/><g stroke="#2d2d2d" stroke-width="1.5" fill="none"><line x1="484.9" y1="533.2" x2="483.0" y2="542.8"/><line x1="488.7" y1="533.2" x2="486.8" y2="542.8"/><line x1="481.8" y1="536.4" x2="490" y2="536.4"/><line x1="481.2" y1="540" x2="489.3" y2="540"/></g></svg>
<div style="position:absolute;left:456.15px;top:555.73px;font:400 14.5px/14.5px 'Liberation Sans', sans-serif;color:#383838;white-space:nowrap;transform:scaleX(1.0332);transform-origin:0 0;">Count</div>
<svg style="position:absolute;left:0;top:0" width="748" height="668" viewBox="0 0 748 668"><rect x="536.4" y="513.6" width="34.2" height="26.7" fill="#f8f8f8"/><rect x="558.6" y="513.6" width="12" height="17.8" fill="#f8d88c"/><line x1="535.8" y1="513.6" x2="571.2" y2="513.6" stroke="#585858" stroke-width="1.4"/><line x1="535.8" y1="522.5" x2="571.2" y2="522.5" stroke="#585858" stroke-width="1.4"/><line x1="535.8" y1="531.4" x2="571.2" y2="531.4" stroke="#585858" stroke-width="1.4"/><line x1="535.8" y1="540.3" x2="571.2" y2="540.3" stroke="#585858" stroke-width="1.4"/><line x1="536.4" y1="513" x2="536.4" y2="541" stroke="#585858" stroke-width="1.3"/><line x1="547.6" y1="513" x2="547.6" y2="541" stroke="#585858" stroke-width="1.3"/><line x1="558.6" y1="513" x2="558.6" y2="541" stroke="#585858" stroke-width="1.3"/><line x1="570.6" y1="513" x2="570.6" y2="541" stroke="#585858" stroke-width="1.3"/><rect x="558.6" y="513.6" width="12" height="17.8" fill="none" stroke="#e98514" stroke-width="1.4"/><line x1="558.6" y1="522.5" x2="570.6" y2="522.5" stroke="#e98514" stroke-width="1.4"/><rect x="551.6" y="529.9" width="20.8" height="15.9" fill="#f8f8f8" stroke="#4d4d4d" stroke-width="1.5"/><g stroke="#2d2d2d" stroke-width="1.3" fill="none"><circle cx="558.5" cy="535.7" r="1.8"/><circle cx="564.8" cy="540.8" r="1.8"/><line x1="565.4" y1="533.4" x2="558.4" y2="542.9"/></g></svg>
<div style="position:absolute;left:528.68px;top:555.73px;font:400 14.5px/14.5px 'Liberation Sans', sans-serif;color:#383838;white-space:nowrap;transform:scaleX(1.0258);transform-origin:0 0;">% Total</div>
<svg style="position:absolute;left:0;top:0" width="748" height="668" viewBox="0 0 748 668"><rect x="612.4" y="513.6" width="34.2" height="26.7" fill="#f8f8f8"/><rect x="634.6" y="513.6" width="12" height="17.8" fill="#f8d88c"/><line x1="611.8" y1="513.6" x2="647.2" y2="513.6" stroke="#585858" stroke-width="1.4"/><line x1="611.8" y1="522.5" x2="647.2" y2="522.5" stroke="#585858" stroke-width="1.4"/><line x1="611.8" y1="531.4" x2="647.2" y2="531.4" stroke="#585858" stroke-width="1.4"/><line x1="611.8" y1="540.3" x2="647.2" y2="540.3" stroke="#585858" stroke-width="1.4"/><line x1="612.4" y1="513" x2="612.4" y2="541" stroke="#585858" stroke-width="1.3"/><line x1="623.6" y1="513" x2="623.6" y2="541" stroke="#585858" stroke-width="1.3"/><line x1="634.6" y1="513" x2="634.6" y2="541" stroke="#585858" stroke-width="1.3"/><line x1="646.6" y1="513" x2="646.6" y2="541" stroke="#585858" stroke-width="1.3"/><rect x="634.6" y="513.6" width="12" height="17.8" fill="none" stroke="#e98514" stroke-width="1.4"/><line x1="634.6" y1="522.5" x2="646.6" y2="522.5" stroke="#e98514" stroke-width="1.4"/><rect x="627.6" y="529.9" width="20.8" height="15.9" fill="#f8f8f8" stroke="#4d4d4d" stroke-width="1.5"/><path d="M631.8,532.7 C636,532.2 639.5,533 638,536 C636.5,538.3 633.5,538.3 634,540.5 C634.4,542.6 638,542.3 643.6,542.3" fill="none" stroke="#333" stroke-width="1.1"/><path d="M640.6,539.9 L643.8,542.3 L640.6,544.7" fill="none" stroke="#333" stroke-width="1.1"/></svg>
<div style="position:absolute;left:601.22px;top:555.73px;font:400 14.5px/14.5px 'Liberation Sans', sans-serif;color:#383838;white-space:nowrap;transform:scaleX(1.0171);transform-origin:0 0;">Running</div>
<div style="position:absolute;left:611.88px;top:575.73px;font:400 14.5px/14.5px 'Liberation Sans', sans-serif;color:#383838;white-space:nowrap;transform:scaleX(1.1000);transform-origin:0 0;">Total</div>
<svg style="position:absolute;left:0;top:0" width="748" height="668"><polyline points="203.6,544.2 201.4,546.4 203.6,548.6" fill="none" stroke="#1e1e1e" stroke-width="1.25"/><polyline points="674.3,544.3 676.6,546.4 674.3,548.5" fill="none" stroke="#9a9a9a" stroke-width="1.2"/></svg>
<svg style="position:absolute;left:0;top:0" width="748" height="668"><path d="M355.40000000000003,493.7 H442.7 Q444.5,493.7 444.5,495.5 V589.2 Q444.5,591.0 442.7,591.0 H355.40000000000003 Q353.6,591.0 353.6,589.2 V495.5 Q353.6,493.7 355.40000000000003,493.7 Z M358.4,498.4 V586.3 H439.8 V498.4 Z" fill="#ec1c24" fill-rule="evenodd"/></svg>
<div style="position:absolute;left:193.35px;top:618.00px;font:400 13px/13px 'Liberation Sans', sans-serif;color:#3d3d3d;white-space:nowrap;transform:scaleX(1.0120);transform-origin:0 0;">Formulas automatically calculate totals for you.</div>
<svg style="position:absolute;left:0;top:0" width="748" height="668" viewBox="0 0 748 668">
<line x1="603" y1="409" x2="480" y2="485" stroke="#ec1c24" stroke-width="7" stroke-linecap="round"/>
<polygon points="449,504 471.3,474 478,483 481,488 485.7,497" fill="#ec1c24"/>
</svg>
<div style="position:absolute;left:0px;top:0px;width:748px;height:1px;background:#6f6f6f;"></div>
<div style="position:absolute;left:0px;top:667px;width:748px;height:1px;background:#6f6f6f;"></div>
<div style="position:absolute;left:0px;top:0px;width:1px;height:668px;background:#6f6f6f;"></div>
<div style="position:absolute;left:747px;top:0px;width:1px;height:668px;background:#6f6f6f;"></div>
</body></html>
